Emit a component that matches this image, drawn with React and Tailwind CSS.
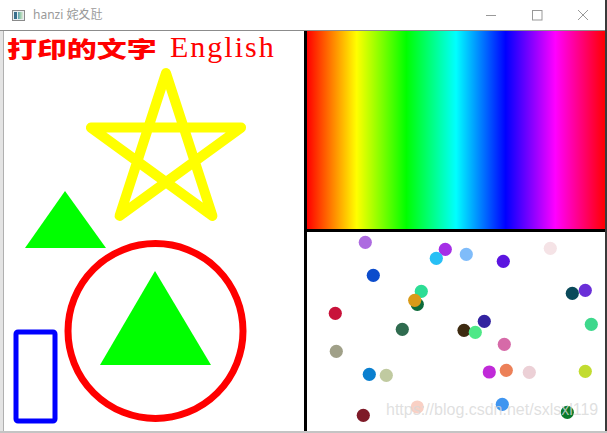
import React from "react";

const dots = [
  [58.3, 10.3, "#ad6be0"],
  [138.3, 17.3, "#a52fe6"],
  [129.3, 26.3, "#27bff5"],
  [159.3, 22.3, "#7fbcfa"],
  [196.3, 29.3, "#5b14e0"],
  [243.3, 16.3, "#f5e3e6"],
  [66.3, 43.3, "#0c4ccc"],
  [114.3, 59.3, "#2cdd95"],
  [110.3, 72.3, "#0d6b3a"],
  [107.7, 68.3, "#d99a18"],
  [265.3, 61.3, "#0a4a5a"],
  [278.3, 58.3, "#6a2fd8"],
  [28.3, 81.3, "#c8123a"],
  [95.3, 97.3, "#2f6b4f"],
  [177.3, 89.3, "#3323a0"],
  [157, 98.3, "#3d2a10"],
  [168.3, 100.3, "#4ee887"],
  [284.3, 92.3, "#3ed88c"],
  [197.3, 112.3, "#d66aa8"],
  [29.3, 119.3, "#a0a088"],
  [62.3, 142.3, "#0a7fcf"],
  [79.3, 143.3, "#c0caa0"],
  [182.3, 140, "#c02ad8"],
  [199.3, 138.3, "#ec8058"],
  [222.3, 140.3, "#ecd0d6"],
  [278.3, 139.3, "#c2dc30"],
  [110.3, 175, "#f9d0c4"],
  [195.3, 172.3, "#3f95f0"],
  [56.3, 183.3, "#7e1a28"],
  [260.3, 180.3, "#0a7a2a"],
];

function TitleBar() {
  return (
    <div className="flex h-[31px] items-center bg-white border-b border-[#8c8c8c]">
      <div className="ml-[12px] flex h-[11px] w-[13px] items-stretch border border-[#8a8a8a] bg-[#e8eef0] p-[1px]">
        <div className="w-[3px] bg-[#3a6f8c]" />
        <div className="ml-[1px] flex-1 bg-gradient-to-r from-[#5aa0b0] via-[#9ccfb0] to-[#dfe8d8]" />
      </div>
      <span
        className="ml-[8px] text-[12px] text-[#9a9a9a] leading-none"
        style={{ fontFamily: '"Noto Sans", "Noto Sans CJK SC", sans-serif' }}
      >
        hanzi 姹夊瓧
      </span>
      <div className="ml-auto flex items-center">
        <svg width="12" height="12" viewBox="0 0 12 12" className="mr-[34px]">
          <line x1="1" y1="6.5" x2="11" y2="6.5" stroke="#999" strokeWidth="1" />
        </svg>
        <svg width="12" height="12" viewBox="0 0 12 12" className="mr-[34px]">
          <rect x="1.5" y="1.5" width="9.5" height="9.5" fill="none" stroke="#999" strokeWidth="1" />
        </svg>
        <svg width="12" height="12" viewBox="0 0 12 12" className="mr-[16px]">
          <path d="M1 1 L11 11 M11 1 L1 11" stroke="#999" strokeWidth="1" />
        </svg>
      </div>
    </div>
  );
}

function LeftCanvas() {
  const cx = 162, cy = 121, R = 79;
  const pt = (deg) => {
    const a = (deg * Math.PI) / 180;
    return [cx + R * Math.sin(a), cy - R * Math.cos(a)];
  };
  const p = [pt(0), pt(72), pt(144), pt(216), pt(288)];
  const order = [0, 2, 4, 1, 3];
  const d =
    order.map((i, k) => `${k ? "L" : "M"}${p[i][0].toFixed(1)} ${p[i][1].toFixed(1)}`).join(" ") + " Z";
  return (
    <div className="relative h-full w-[300px] bg-white">
      <svg className="absolute inset-0" width="300" height="400" viewBox="0 0 300 400">
        <path d={d} fill="none" stroke="#ffff00" strokeWidth="10" strokeLinejoin="round" />
        <polygon points="61,160 21,217 102,217" fill="#00ff00" />
        <circle cx="151.5" cy="300" r="87.5" fill="none" stroke="#ff0000" strokeWidth="7" />
        <polygon points="151,240 96,334 207,334" fill="#00ff00" />
        <rect x="12" y="301" width="39" height="89" rx="2" fill="none" stroke="#0000ff" strokeWidth="5" />
      </svg>
      <div className="relative flex items-start pl-[3px] text-[#ff0000]">
        <div className="mt-[5px] w-[150px]">
          <span
            className="inline-block origin-left scale-x-[1.36] whitespace-nowrap text-[22px] font-black leading-none"
            style={{ fontFamily: '"Noto Sans CJK SC", sans-serif' }}
          >
            打印的文字
          </span>
        </div>
        <span
          className="ml-[13px] mt-[1px] text-[30px] leading-[30px] tracking-[2px]"
          style={{ fontFamily: '"Liberation Serif", serif' }}
        >
          English
        </span>
      </div>
    </div>
  );
}

function DotsPanel() {
  return (
    <div className="relative flex-1 bg-white overflow-hidden">
      <svg className="absolute inset-0" width="298" height="199" viewBox="0 0 298 199">
        {dots.map(([x, y, c], i) => (
          <circle key={i} cx={x} cy={y} r="6.6" fill={c} />
        ))}
      </svg>
      <span
        className="absolute left-[79px] top-[170px] whitespace-nowrap text-[16px] leading-none text-[#d8d8d8]/80"
        style={{ fontFamily: '"Liberation Sans", sans-serif' }}
      >
        https://blog.csdn.net/sxlsxl119
      </span>
    </div>
  );
}

export default function App() {
  return (
    <div className="flex h-[433px] w-[607px] flex-col overflow-hidden bg-[#c8c8c8]">
      <div className="flex h-[431px] w-[607px]">
        <div className="flex w-[605px] flex-col">
          <TitleBar />
          <div className="flex h-[400px]">
            <div className="w-[4px] bg-[#e4e4e4] border-r border-[#b0b0b0]" />
            <LeftCanvas />
            <div className="w-[3px] bg-black" />
            <div className="flex w-[298px] flex-col">
              <div className="h-[198px] bg-[linear-gradient(to_right,#ff0000,#ffff00,#00ff00,#00ffff,#0000ff,#ff00ff,#ff0000)]" />
              <div className="h-[3px] bg-black" />
              <DotsPanel />
            </div>
          </div>
        </div>
        <div className="w-[2px] bg-[#3a3a3a]" />
      </div>
      <div className="h-[2px] bg-[#c4c4c4]" />
    </div>
  );
}
